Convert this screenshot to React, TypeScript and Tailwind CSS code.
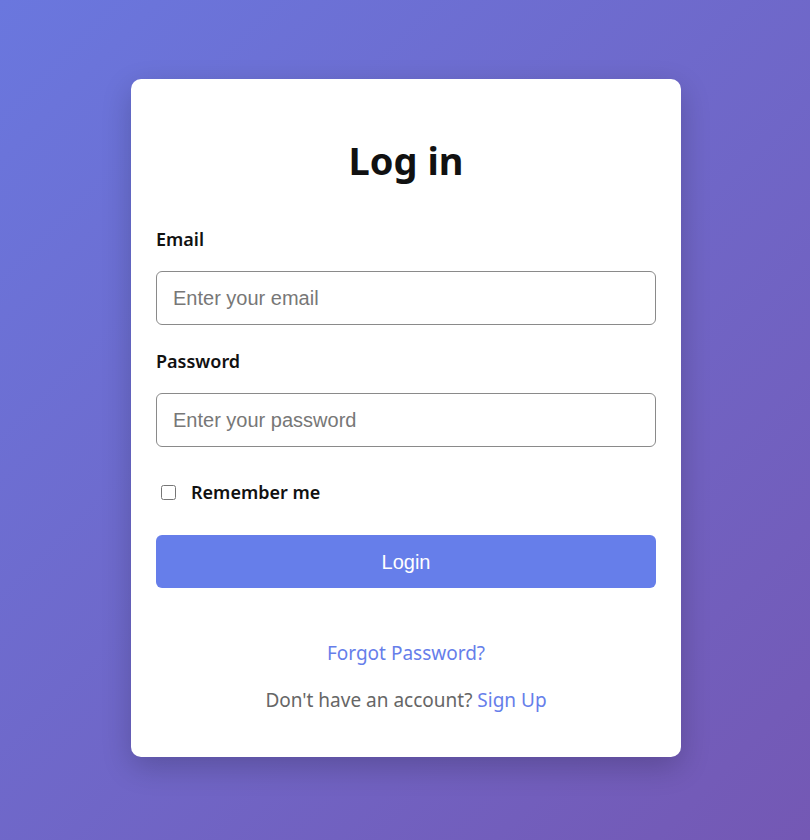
export default function App() {
  return (
    <div className="min-h-screen flex justify-center items-start pt-[79px] pl-[2px] bg-[linear-gradient(135deg,#6a77de_0%,#7458b4_100%)] font-['Noto_Sans',sans-serif]">
      <div className="w-[550px] bg-white rounded-[10px] shadow-[0_10px_30px_rgba(0,0,0,0.2)] px-[25px] pt-[56px] pb-[44px]">
        <h1 className="text-center text-[38px] leading-[50px] font-bold text-[#111]">Log in</h1>

        <form className="flex flex-col" onSubmit={(e) => e.preventDefault()}>
          <label htmlFor="email" className="mt-[41px] text-[18px] leading-[26px] font-semibold text-[#111]">
            Email
          </label>
          <input
            id="email"
            type="email"
            placeholder="Enter your email"
            className="mt-[19px] h-[54px] w-full border border-[#8a8a8a] rounded-[6px] px-[16px] text-[20px] font-['Liberation_Sans',Arial,sans-serif] placeholder:text-[#777] outline-none"
          />

          <label htmlFor="password" className="mt-[23px] text-[18px] leading-[26px] font-semibold text-[#111]">
            Password
          </label>
          <input
            id="password"
            type="password"
            placeholder="Enter your password"
            className="mt-[19px] h-[54px] w-full border border-[#8a8a8a] rounded-[6px] px-[16px] text-[20px] font-['Liberation_Sans',Arial,sans-serif] placeholder:text-[#777] outline-none"
          />

          <label className="mt-[32px] flex items-center h-[26px] text-[18px] font-semibold text-[#111]">
            <input type="checkbox" className="ml-[5px] w-[15px] h-[15px] mr-[15px]" />
            Remember me
          </label>

          <button
            type="submit"
            className="mt-[30px] h-[53px] w-full rounded-[6px] bg-[#667eea] text-white text-[20px] font-['Liberation_Sans',Arial,sans-serif]"
          >
            Login
          </button>
        </form>

        <div className="mt-[52px] text-center text-[19px] leading-[26px]">
          <a href="#" className="text-[#667eea]">Forgot Password?</a>
        </div>
        <div className="mt-[21px] text-center text-[19px] leading-[26px] text-[#666]">
          Don't have an account? <a href="#" className="text-[#667eea]">Sign Up</a>
        </div>
      </div>
    </div>
  );
}
